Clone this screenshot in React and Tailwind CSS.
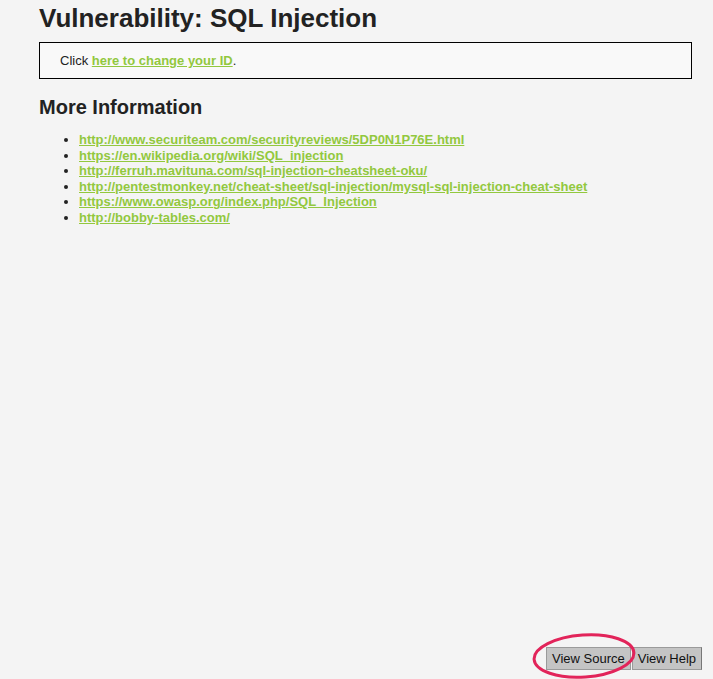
import React from "react";

const links = [
  "http://www.securiteam.com/securityreviews/5DP0N1P76E.html",
  "https://en.wikipedia.org/wiki/SQL_injection",
  "http://ferruh.mavituna.com/sql-injection-cheatsheet-oku/",
  "http://pentestmonkey.net/cheat-sheet/sql-injection/mysql-sql-injection-cheat-sheet",
  "https://www.owasp.org/index.php/SQL_Injection",
  "http://bobby-tables.com/",
];

const App = () => {
  return (
    <div className="min-h-[679px] bg-[#f4f4f4] flex flex-col justify-between font-['Liberation_Sans',Arial,sans-serif] text-[13px] text-[#222]">
      <div className="pl-[39px] pr-[21px]">
        <h1 className="text-[26px] font-bold leading-[30px] pt-[3px] text-[#222]">
          Vulnerability: SQL Injection
        </h1>
        <div className="mt-[9px] border border-black bg-[#f9f9f9] h-[37px] flex items-center pl-[20px]">
          <p>
            Click{" "}
            <span className="font-bold text-[#92c83e] underline">here to change your ID</span>.
          </p>
        </div>
        <h2 className="mt-[16px] text-[20px] font-bold leading-[24px]">More Information</h2>
        <ul className="mt-[13px] pl-[40px] list-disc leading-[15.6px]">
          {links.map((l) => (
            <li key={l}>
              <span className="font-bold text-[#92c83e] underline">{l}</span>
            </li>
          ))}
        </ul>
      </div>
      <div className="flex justify-end pr-[11px] pb-[9px]">
        <div className="relative flex gap-[1px]">
          <button className="h-[23px] px-[5px] bg-[#c4c4c4] border border-[#9a9a9a] text-[13px] text-[#111]">
            View Source
          </button>
          <button className="h-[23px] px-[5px] bg-[#c4c4c4] border border-[#9a9a9a] border-r-[#777] text-[13px] text-[#111]">
            View Help
          </button>
          <svg
            className="absolute left-[-16px] top-[-16px] pointer-events-none"
            width="110"
            height="52"
            viewBox="0 0 110 52"
          >
            <ellipse
              cx="54"
              cy="25"
              rx="50"
              ry="21"
              fill="none"
              stroke="#e2245a"
              strokeWidth="3"
              transform="rotate(-4 54 25)"
            />
          </svg>
        </div>
      </div>
    </div>
  );
};

export default App;
